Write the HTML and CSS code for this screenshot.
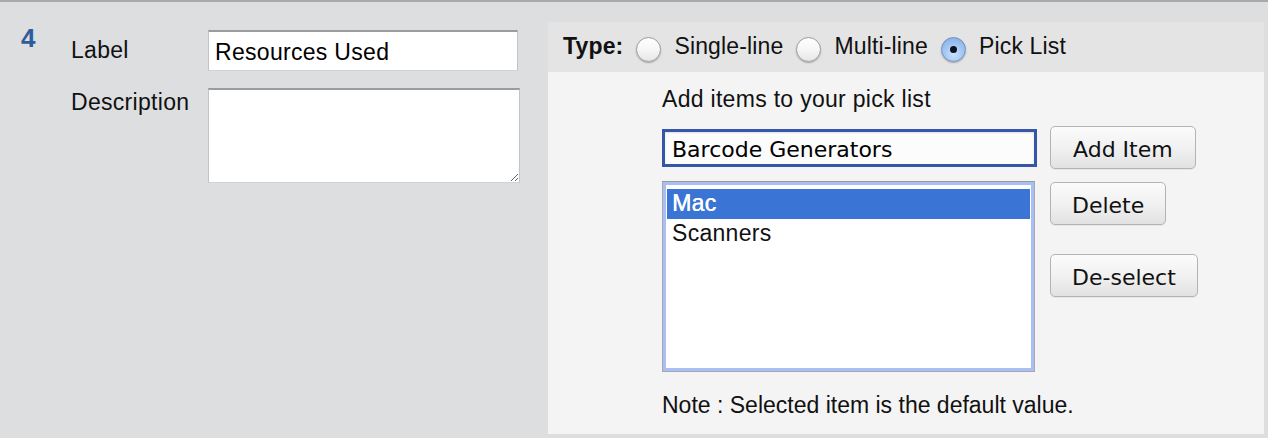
FILE: index.html
```html
<!DOCTYPE html>
<html lang="en">
<head>
<meta charset="utf-8">
<title>Custom field 4</title>
<link rel="stylesheet" href="styles.css">
</head>
<body>
<div class="page">
  <div class="num">4</div>
  <div class="fields">
    <label class="flabel flabel-first" for="lbl">Label</label>
    <input id="lbl" class="text-in" type="text" value="Resources Used">
    <label class="flabel flabel-desc" for="desc">Description</label>
    <textarea id="desc" class="text-area"></textarea>
  </div>
  <div class="panel">
    <div class="panel-head">
      <span class="type-label">Type:</span>
      <label class="opt"><input type="radio" name="type" class="radio">Single-line</label>
      <label class="opt"><input type="radio" name="type" class="radio">Multi-line</label>
      <label class="opt"><input type="radio" name="type" class="radio" checked>Pick List</label>
    </div>
    <div class="panel-body">
      <div class="caption">Add items to your pick list</div>
      <div class="add-row">
        <input class="item-in" type="text" value="Barcode Generators">
        <button class="btn btn-add" type="button">Add Item</button>
      </div>
      <div class="list-row">
        <div class="listbox">
          <div class="listbox-inner">
            <div class="opt-item selected">Mac</div>
            <div class="opt-item">Scanners</div>
          </div>
        </div>
        <div class="list-btns">
          <button class="btn" type="button">Delete</button>
          <button class="btn" type="button">De-select</button>
        </div>
      </div>
      <div class="note">Note : Selected item is the default value.</div>
    </div>
  </div>
</div>
</body>
</html>
```

FILE: styles.css
```css
html, body {
  margin: 0;
  padding: 0;
  background: #dddee0;
}

body {
  width: 1268px;
  height: 438px;
  overflow: hidden;
  font-family: "Liberation Sans", Arial, sans-serif;
  font-size: 23px;
  letter-spacing: 0.3px;
  color: #111;
}

.page {
  display: flex;
  align-items: flex-start;
  border-top: 2px solid #a9a9a9;
  height: 436px;
}

.num {
  width: 50px;
  padding: 21px 0 0 21px;
  font-size: 26px;
  line-height: 30px;
  font-weight: bold;
  color: #2f5c9c;
  letter-spacing: 0;
}

.fields {
  display: grid;
  grid-template-columns: 137px 312px;
  row-gap: 17px;
  margin-top: 28px;
  align-items: start;
}

.flabel {
  color: #111;
}

.flabel-first {
  line-height: 41px;
  padding-top: 0;
}

.flabel-desc {
  line-height: 26px;
  padding-top: 1px;
}

.text-in {
  box-sizing: border-box;
  width: 310px;
  height: 41px;
  margin: 0;
  padding: 2px 0 0 6px;
  border: 1px solid #c4c4c4;
  border-top: 2px solid #9c9c9c;
  border-bottom-color: #d2d2d2;
  background: #fff;
  font-family: "Liberation Sans", Arial, sans-serif;
  font-size: 23px;
  letter-spacing: 0.3px;
  color: #000;
  outline: none;
}

.text-area {
  box-sizing: border-box;
  width: 312px;
  height: 95px;
  margin: 0;
  padding: 4px 6px;
  border: 1px solid #c4c4c4;
  border-top: 2px solid #9c9c9c;
  border-bottom-color: #d2d2d2;
  background: #fff;
  font-family: "Liberation Sans", Arial, sans-serif;
  font-size: 23px;
  resize: both;
  outline: none;
  display: block;
}

.panel {
  margin: 20px 0 0 28px;
  width: 716px;
  height: 412px;
  background: #f4f4f4;
  display: flex;
  flex-direction: column;
}

.panel-head {
  box-sizing: border-box;
  height: 50px;
  background: #e4e4e4;
  display: flex;
  align-items: center;
  gap: 13px;
  padding: 0 0 3px 15px;
  line-height: 26px;
  letter-spacing: 0.15px;
}

.type-label {
  font-weight: bold;
}

.opt {
  display: flex;
  align-items: center;
  gap: 13px;
  color: #111;
}

.radio {
  appearance: none;
  -webkit-appearance: none;
  box-sizing: border-box;
  width: 25px;
  height: 25px;
  margin: 8px 0 0 0;
  border-radius: 50%;
  border: 1px solid #9d9d9d;
  background: linear-gradient(#ffffff 0%, #f6f6f6 50%, #e6e6e6 100%);
  box-shadow: 0 1px 1.5px rgba(0, 0, 0, 0.28);
  position: relative;
  flex: none;
}

.radio:checked {
  border-color: #6f8fbf;
  background: radial-gradient(circle at 50% 70%, #c9e2fd 0%, #a4c8f3 45%, #7fa9e3 100%);
}

.radio:checked::after {
  content: "";
  position: absolute;
  left: 8px;
  top: 8px;
  width: 7px;
  height: 7px;
  border-radius: 50%;
  background: #0d1420;
}

.panel-body {
  padding: 14px 0 0 114px;
}

.caption {
  line-height: 26px;
  color: #111;
}

.add-row {
  display: flex;
  align-items: center;
  margin-top: 14px;
}

.item-in {
  box-sizing: border-box;
  width: 375px;
  height: 38px;
  margin: 1px 13px 0 0;
  padding: 2px 0 0 7px;
  border: 3px solid #3657a7;
  background: #fcfcfc;
  box-shadow: inset 0 1px 2px rgba(0, 0, 0, 0.12);
  font-family: "DejaVu Sans", Verdana, sans-serif;
  font-size: 22px;
  letter-spacing: 0;
  color: #000;
  outline: none;
}

.btn {
  box-sizing: border-box;
  height: 43px;
  margin: 0;
  padding: 4px 21px 0;
  line-height: 37px;
  border: 1px solid #b3b3b3;
  border-radius: 5px;
  background: linear-gradient(#fbfbfb 0%, #f1f1f1 50%, #e2e2e2 100%);
  box-shadow: 0 1px 0 rgba(0, 0, 0, 0.05);
  font-family: "DejaVu Sans", Verdana, sans-serif;
  font-size: 22px;
  letter-spacing: 0;
  color: #111;
  text-align: center;
}

.btn-add {
  padding: 4px 22px 0 22px;
}

.list-row {
  display: flex;
  align-items: flex-start;
  margin-top: 12px;
}

.listbox {
  box-sizing: border-box;
  width: 373px;
  height: 191px;
  margin-right: 15px;
  border: 1px solid #a9a9a9;
  border-top-color: #999;
}

.listbox-inner {
  box-sizing: border-box;
  height: 100%;
  border: 3px solid #a8bff5;
  background: #fff;
  padding: 4px 1px 0;
}

.opt-item {
  height: 30px;
  line-height: 28px;
  padding-left: 5px;
  color: #111;
}

.opt-item.selected {
  background: #3a75d6;
  color: #fff;
  text-shadow: 0.4px 0 0 #fff;
}

.list-btns {
  display: flex;
  flex-direction: column;
  align-items: flex-start;
  gap: 29px;
  padding-top: 1px;
}

.note {
  margin-top: 20px;
  line-height: 26px;
  color: #111;
  letter-spacing: 0;
}
```
